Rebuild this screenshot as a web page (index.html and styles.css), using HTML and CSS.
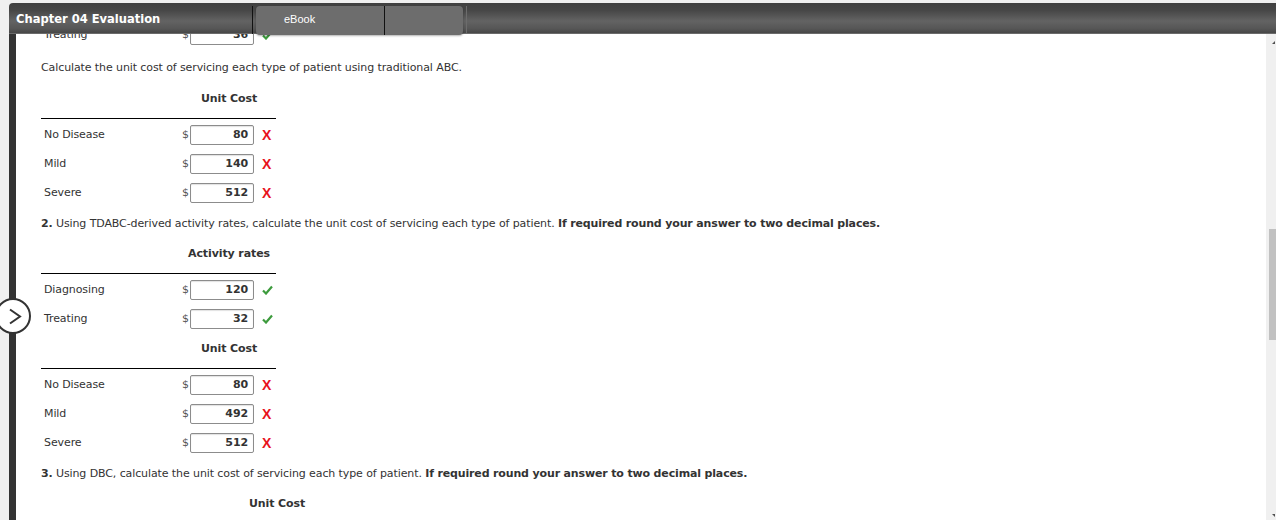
FILE: index.html
```html
<!DOCTYPE html>
<html lang="en">
<head>
    <meta charset="UTF-8">
    <meta name="viewport" content="width=device-width, initial-scale=1.0">
    <title>Chapter 04 Evaluation</title>
    <link rel="stylesheet" href="styles.css">
</head>
<body>
    <div class="frame">
        <div class="topbar">
            <div class="title">Chapter 04 Evaluation</div>
            <div class="sep"></div>
            <div class="tab">
                <span class="tab-label">eBook</span>
                <span class="tab-split"></span>
            </div>
            <div class="sep light"></div>
        </div>
        <div class="main">
            <div class="rail"></div>
            <div class="panel">
                <div class="content">
                    <div class="row first">
                        <span class="label">Treating</span>
                        <span class="cur">$</span>
                        <span class="box">36</span>
                        <span class="mark ok"><svg width="11" height="10" viewBox="0 0 11 10"><path d="M1 5.5 L4 8.5 L10 1.5" fill="none" stroke="#3d9b3d" stroke-width="2.2"/></svg></span>
                    </div>

                    <p>Calculate the unit cost of servicing each type of patient using traditional ABC.</p>
                    <div class="grid">
                        <div class="head">Unit Cost</div>
                        <div class="row">
                            <span class="label">No Disease</span>
                            <span class="cur">$</span>
                            <span class="box">80</span>
                            <span class="mark bad">X</span>
                        </div>
                        <div class="row">
                            <span class="label">Mild</span>
                            <span class="cur">$</span>
                            <span class="box">140</span>
                            <span class="mark bad">X</span>
                        </div>
                        <div class="row">
                            <span class="label">Severe</span>
                            <span class="cur">$</span>
                            <span class="box">512</span>
                            <span class="mark bad">X</span>
                        </div>
                    </div>

                    <p class="q"><b>2.</b> Using TDABC-derived activity rates, calculate the unit cost of servicing each type of patient. <b>If required round your answer to two decimal places.</b></p>
                    <div class="grid">
                        <div class="head">Activity rates</div>
                        <div class="row">
                            <span class="label">Diagnosing</span>
                            <span class="cur">$</span>
                            <span class="box">120</span>
                            <span class="mark ok"><svg width="11" height="10" viewBox="0 0 11 10"><path d="M1 5.5 L4 8.5 L10 1.5" fill="none" stroke="#3d9b3d" stroke-width="2.2"/></svg></span>
                        </div>
                        <div class="row">
                            <span class="label">Treating</span>
                            <span class="cur">$</span>
                            <span class="box">32</span>
                            <span class="mark ok"><svg width="11" height="10" viewBox="0 0 11 10"><path d="M1 5.5 L4 8.5 L10 1.5" fill="none" stroke="#3d9b3d" stroke-width="2.2"/></svg></span>
                        </div>
                    </div>
                    <div class="grid">
                        <div class="head">Unit Cost</div>
                        <div class="row">
                            <span class="label">No Disease</span>
                            <span class="cur">$</span>
                            <span class="box">80</span>
                            <span class="mark bad">X</span>
                        </div>
                        <div class="row">
                            <span class="label">Mild</span>
                            <span class="cur">$</span>
                            <span class="box">492</span>
                            <span class="mark bad">X</span>
                        </div>
                        <div class="row">
                            <span class="label">Severe</span>
                            <span class="cur">$</span>
                            <span class="box">512</span>
                            <span class="mark bad">X</span>
                        </div>
                    </div>

                    <p class="q"><b>3.</b> Using DBC, calculate the unit cost of servicing each type of patient. <b>If required round your answer to two decimal places.</b></p>
                    <div class="grid wide">
                        <div class="head">Unit Cost</div>
                    </div>
                </div>
            </div>
            <div class="scrollbar">
                <span class="arrow up"></span>
                <span class="thumb"></span>
                <span class="arrow down"></span>
            </div>
            <div class="next">
                <svg width="14" height="17" viewBox="0 0 14 17"><path d="M2 1.5 L12 8.5 L2 15.5" fill="none" stroke="#333" stroke-width="2"/></svg>
            </div>
        </div>
    </div>
</body>
</html>
```

FILE: styles.css
```css
html, body {
    margin: 0;
    padding: 0;
    height: 520px;
    overflow: hidden;
}
body {
    font-family: "DejaVu Sans", Verdana, sans-serif;
    font-size: 11px;
    letter-spacing: -0.1px;
    color: #333;
    background-color: #f0f0f0;
}
b {
    letter-spacing: -0.15px;
}
.frame {
    padding: 3px 0 0 9px;
    height: 517px;
    display: flex;
    flex-direction: column;
}
.topbar {
    height: 30px;
    flex: none;
    display: flex;
    align-items: stretch;
    border-radius: 4px 0 0 0;
    border-bottom: 1px solid #6a6a6a;
    background: linear-gradient(#404040, #474747 25%, #636363 60%, #565656 85%, #474747);
    position: relative;
    z-index: 2;
}
.title {
    width: 236px;
    padding: 8px 0 0 7px;
    color: #fff;
    font-family: "DejaVu Sans Condensed", "DejaVu Sans", sans-serif;
    font-weight: bold;
    font-size: 12.8px;
    letter-spacing: 0;
}
.sep {
    width: 1px;
    margin-top: 3px;
    margin-bottom: -1px;
    background-color: #111;
}
.sep.light {
    margin-left: 3px;
    background-color: #6c6c6c;
}
.tab {
    width: 207px;
    margin: 3px 0 -2px 3px;
    background-color: #6d6d6d;
    border-radius: 4px;
    display: flex;
    box-shadow: 0 1px 2px rgba(0, 0, 0, 0.3);
}
.tab-label {
    width: 128px;
    padding: 7px 0 0 28px;
    box-sizing: border-box;
    color: #fff;
    font-family: "Liberation Sans", Arial, sans-serif;
    font-size: 11px;
    letter-spacing: 0;
}
.tab-split {
    width: 1px;
    background-color: #111;
}
.main {
    flex: 1;
    display: flex;
    min-height: 0;
    position: relative;
}
.rail {
    width: 7px;
    background-color: #333;
}
.panel {
    flex: 1;
    background-color: #fff;
    overflow: hidden;
}
.content {
    padding-left: 25px;
    margin-top: -14px;
}
p {
    margin: 11px 0 8px;
    line-height: 15px;
}
p.q {
    margin: 9px 0 7px;
}
.grid {
    width: 268px;
}
.grid.wide {
    width: 364px;
}
.head {
    padding: 8px 0 12px 141px;
    margin-bottom: 1px;
    width: 94px;
    line-height: 15px;
    text-align: center;
    font-weight: bold;
    border-bottom: 1px solid #000;
}
.grid.wide .head {
    padding-left: 189px;
}
.row {
    height: 29px;
    display: flex;
    align-items: center;
}
.row.first {
    margin-bottom: 10px;
}
.label {
    width: 138px;
    padding-left: 3px;
}
.cur {
    width: 8px;
    color: #555;
}
.box {
    width: 64px;
    height: 20px;
    box-sizing: border-box;
    border: 1px solid #8c8c8c;
    border-radius: 2px;
    box-shadow: inset 0 1px 1px rgba(0, 0, 0, 0.12);
    padding-right: 5px;
    text-align: right;
    line-height: 18px;
    font-weight: bold;
    color: #333;
}
.mark {
    margin-left: 8px;
    display: flex;
    align-items: center;
}
.mark.bad {
    color: #e8121c;
    font-family: "Liberation Sans", Arial, sans-serif;
    font-weight: bold;
    font-size: 14px;
}
.next {
    position: absolute;
    left: -14px;
    top: 264px;
    width: 32px;
    height: 32px;
    border: 2px solid #333;
    border-radius: 50%;
    background-color: #fff;
    display: flex;
    align-items: center;
    justify-content: center;
}
.next svg {
    margin-left: 3px;
}
.scrollbar {
    width: 10px;
    background-color: #f0f0f0;
    display: flex;
    flex-direction: column;
    align-items: flex-end;
    padding-top: 7px;
    box-sizing: border-box;
}
.arrow {
    width: 0;
    height: 0;
    border-left: 3px solid transparent;
    margin-right: 1px;
}
.arrow.up {
    border-bottom: 3px solid #505050;
}
.arrow.down {
    border-top: 3px solid #505050;
    margin-top: auto;
    margin-bottom: 3px;
}
.thumb {
    width: 7px;
    height: 111px;
    margin-top: 185px;
    background-color: #c1c1c1;
}
```
